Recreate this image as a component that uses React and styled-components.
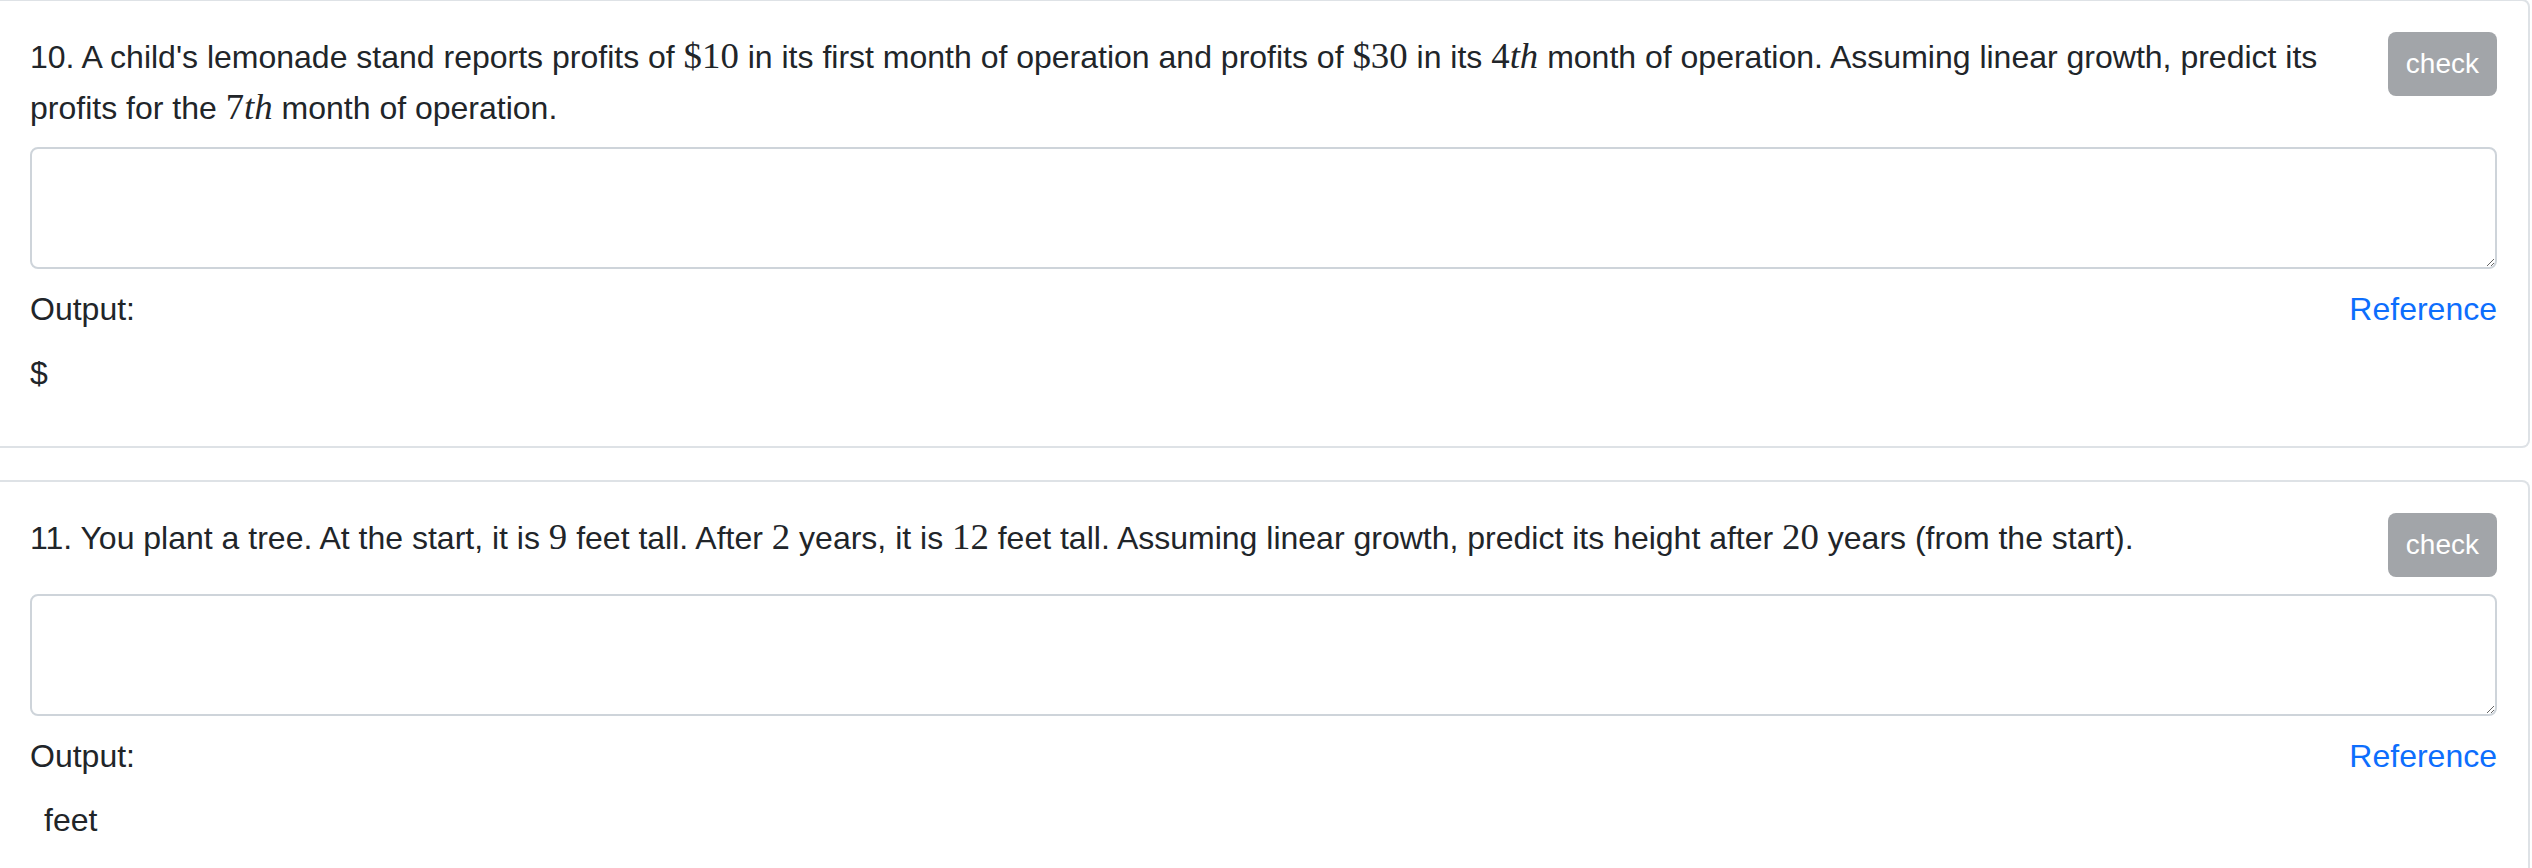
import styled, { createGlobalStyle } from 'styled-components'

const GlobalStyle = createGlobalStyle`
  html, body {
    margin: 0;
    padding: 0;
    background: #fff;
  }
  body {
    font-family: 'Liberation Sans', Arial, Helvetica, sans-serif;
    font-size: 32px;
    line-height: 1.5;
    color: #212529;
    overflow: hidden;
  }
`

const Page = styled.div`
  width: 2532px;
  height: 868px;
  padding-right: 2px;
  box-sizing: border-box;
  overflow: hidden;
`

const Card = styled.section`
  border: 2px solid #dee2e6;
  border-left: none;
  border-radius: 0 8px 8px 0;
  padding: 31px 31px 31px 30px;
  background: #fff;

  &:first-child {
    margin-top: -1px;
  }

  & + & {
    margin-top: 32px;
  }
`

const Header = styled.div`
  display: flex;
  align-items: flex-start;
  gap: 32px;
  margin-bottom: 17px;
`

const Question = styled.div`
  flex: 1;
  min-width: 0;
  line-height: 50px;
  margin: -1px 0 -3px;
`

const MathText = styled.span`
  font-family: 'Liberation Serif', 'Times New Roman', serif;
  font-size: 1.15em;
  white-space: nowrap;
`

const Var = styled.i`
  font-style: italic;
`

const CheckButton = styled.button`
  flex: none;
  height: 64px;
  padding: 0 16px;
  border: 2px solid transparent;
  border-radius: 8px;
  background: #a2a5a9;
  color: #fff;
  font-family: 'Liberation Sans', Arial, sans-serif;
  font-size: 28px;
  line-height: 1.5;
  cursor: default;
`

const Answer = styled.textarea`
  display: block;
  width: 100%;
  height: 122px;
  box-sizing: border-box;
  margin: 0 0 16px;
  padding: 12px 24px;
  border: 2px solid #ced4da;
  border-radius: 8px;
  font-family: 'Liberation Sans', Arial, sans-serif;
  font-size: 32px;
  line-height: 1.5;
  color: #212529;
  background: #fff;
  outline: none;
`

const OutputRow = styled.div`
  display: flex;
  justify-content: space-between;
  align-items: baseline;
  margin-bottom: 16px;
`

const RefLink = styled.a`
  color: #0d6efd;
  text-decoration: none;
`

const Result = styled.div`
  min-height: 48px;
  margin-bottom: 18px;
  padding-left: ${(p) => p.$indent || 0}px;
`

const Problem = ({ children, result, indent }) => (
  <Card>
    <Header>
      <Question>{children}</Question>
      <CheckButton type='button'>check</CheckButton>
    </Header>
    <Answer />
    <OutputRow>
      <span>Output:</span>
      <RefLink href='#'>Reference</RefLink>
    </OutputRow>
    <Result $indent={indent}>{result}</Result>
  </Card>
)

const App = () => (
  <Page>
    <GlobalStyle />
    <Problem result='$'>
      10. A child's lemonade stand reports profits of <MathText>$10</MathText> in its first month of
      operation and profits of <MathText>$30</MathText> in its{' '}
      <MathText>
        4<Var>th</Var>
      </MathText>{' '}
      month of operation. Assuming linear growth, predict its profits for the{' '}
      <MathText>
        7<Var>th</Var>
      </MathText>{' '}
      month of operation.
    </Problem>
    <Problem result='feet' indent={14}>
      11. You plant a tree. At the start, it is <MathText>9</MathText> feet tall. After{' '}
      <MathText>2</MathText> years, it is <MathText>12</MathText> feet tall. Assuming linear growth,
      predict its height after <MathText>20</MathText> years (from the start).
    </Problem>
  </Page>
)

export default App
